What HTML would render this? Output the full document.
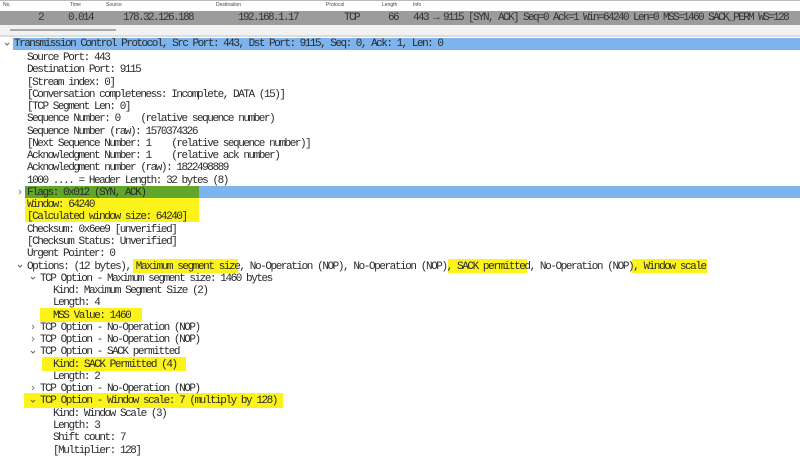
<!DOCTYPE html>
<html><head><style>
*{margin:0;padding:0;box-sizing:border-box}
body{width:800px;height:458px;overflow:hidden;background:#fff;position:relative;font-family:"Liberation Mono",monospace;color:#222}
.h{position:absolute;top:2px;font-family:"Liberation Sans",sans-serif;font-size:5px;color:#444}
.r{position:absolute;top:12px;font-size:11px;letter-spacing:-1.6px;color:#333}
.l{position:absolute;font-size:11px;letter-spacing:-1.45px;line-height:12.27px;white-space:pre;color:#2a2a2a}
.l div{height:12.27px}
.b{padding-left:13px}.c{padding-left:26px}
.y{position:absolute;background:#fbf31a}
svg.a{position:absolute;width:6px;height:6px}
</style></head><body>
<div style="position:absolute;left:0;top:0;width:800px;height:1px;background:#bbb"></div>
<div style="position:absolute;left:0;top:11px;width:800px;height:14px;background:#9c9c9c"></div>
<div style="position:absolute;left:0;top:25px;width:800px;height:11px;background:#f2f2f2"></div>
<div style="position:absolute;left:10px;top:29px;width:106px;height:2px;background:#aaa"></div>
<div style="position:absolute;left:0;top:35px;width:800px;height:2px;background:#ddd"></div>
<div class="h" style="left:3px">No.</div><div class="h" style="left:70px">Time</div><div class="h" style="left:106px">Source</div><div class="h" style="left:216px">Destination</div><div class="h" style="left:326px">Protocol</div><div class="h" style="left:382px">Length</div><div class="h" style="left:413px">Info</div>
<div class="r" style="left:38px">2</div><div class="r" style="left:68px">0.014</div><div class="r" style="left:123px">178.32.126.188</div><div class="r" style="left:238px">192.168.1.17</div><div class="r" style="left:344px">TCP</div><div class="r" style="left:388px">66</div><div class="r" style="left:413px">443 → 9115 [SYN, ACK] Seq=0 Ack=1 Win=64240 Len=0 MSS=1460 SACK_PERM WS=128</div>
<div style="position:absolute;left:13px;top:38px;width:787px;height:12px;background:#7db4ee"></div>
<div style="position:absolute;left:199px;top:186px;width:601px;height:12px;background:#7db4ee"></div>
<div class="y" style="left:25px;top:186px;width:174px;height:36px"></div>
<div style="position:absolute;left:25px;top:186px;width:174px;height:12px;background:#5fa62a"></div>
<div class="y" style="left:133px;top:259px;width:105px;height:14px"></div>
<div class="y" style="left:448px;top:259px;width:79px;height:14px"></div>
<div class="y" style="left:632px;top:259px;width:75px;height:14px"></div>
<div class="y" style="left:40px;top:308px;width:102px;height:14px"></div>
<div class="y" style="left:42px;top:357px;width:144px;height:14px"></div>
<div class="y" style="left:24px;top:393px;width:259px;height:15px"></div>
<svg class="a" style="left:4px;top:41px" viewBox="0 0 6 6"><path d="M1 2 L3 4 L5 2" fill="none" stroke="#666"/></svg>
<svg class="a" style="left:17px;top:189px" viewBox="0 0 6 6"><path d="M2 1 L4 3 L2 5" fill="none" stroke="#888"/></svg>
<svg class="a" style="left:17px;top:263px" viewBox="0 0 6 6"><path d="M1 2 L3 4 L5 2" fill="none" stroke="#666"/></svg>
<svg class="a" style="left:30px;top:275px" viewBox="0 0 6 6"><path d="M1 2 L3 4 L5 2" fill="none" stroke="#666"/></svg>
<svg class="a" style="left:30px;top:324px" viewBox="0 0 6 6"><path d="M2 1 L4 3 L2 5" fill="none" stroke="#888"/></svg>
<svg class="a" style="left:30px;top:336px" viewBox="0 0 6 6"><path d="M2 1 L4 3 L2 5" fill="none" stroke="#888"/></svg>
<svg class="a" style="left:30px;top:349px" viewBox="0 0 6 6"><path d="M1 2 L3 4 L5 2" fill="none" stroke="#666"/></svg>
<svg class="a" style="left:30px;top:385px" viewBox="0 0 6 6"><path d="M2 1 L4 3 L2 5" fill="none" stroke="#888"/></svg>
<svg class="a" style="left:30px;top:398px" viewBox="0 0 6 6"><path d="M1 2 L3 4 L5 2" fill="none" stroke="#666"/></svg>
<div class="l" style="left:14px;top:38px;letter-spacing:-1.5px">Transmission Control Protocol, Src Port: 443, Dst Port: 9115, Seq: 0, Ack: 1, Len: 0</div>
<div class="l" style="left:27px;top:52px"><div>Source Port: 443</div><div>Destination Port: 9115</div><div>[Stream index: 0]</div><div>[Conversation completeness: Incomplete, DATA (15)]</div><div>[TCP Segment Len: 0]</div><div>Sequence Number: 0    (relative sequence number)</div><div>Sequence Number (raw): 1570374326</div><div>[Next Sequence Number: 1    (relative sequence number)]</div><div>Acknowledgment Number: 1    (relative ack number)</div><div>Acknowledgment number (raw): 1822498889</div><div>1000 .... = Header Length: 32 bytes (8)</div><div>Flags: 0x012 (SYN, ACK)</div><div>Window: 64240</div><div>[Calculated window size: 64240]</div><div>Checksum: 0x6ee9 [unverified]</div><div>[Checksum Status: Unverified]</div><div>Urgent Pointer: 0</div><div style="letter-spacing:-1.42px">Options: (12 bytes), Maximum segment size, No-Operation (NOP), No-Operation (NOP), SACK permitted, No-Operation (NOP), Window scale</div><div class="b">TCP Option - Maximum segment size: 1460 bytes</div><div class="c">Kind: Maximum Segment Size (2)</div><div class="c">Length: 4</div><div class="c">MSS Value: 1460</div><div class="b">TCP Option - No-Operation (NOP)</div><div class="b">TCP Option - No-Operation (NOP)</div><div class="b">TCP Option - SACK permitted</div><div class="c">Kind: SACK Permitted (4)</div><div class="c">Length: 2</div><div class="b">TCP Option - No-Operation (NOP)</div><div class="b">TCP Option - Window scale: 7 (multiply by 128)</div><div class="c">Kind: Window Scale (3)</div><div class="c">Length: 3</div><div class="c">Shift count: 7</div><div class="c">[Multiplier: 128]</div></div>
</body></html>
